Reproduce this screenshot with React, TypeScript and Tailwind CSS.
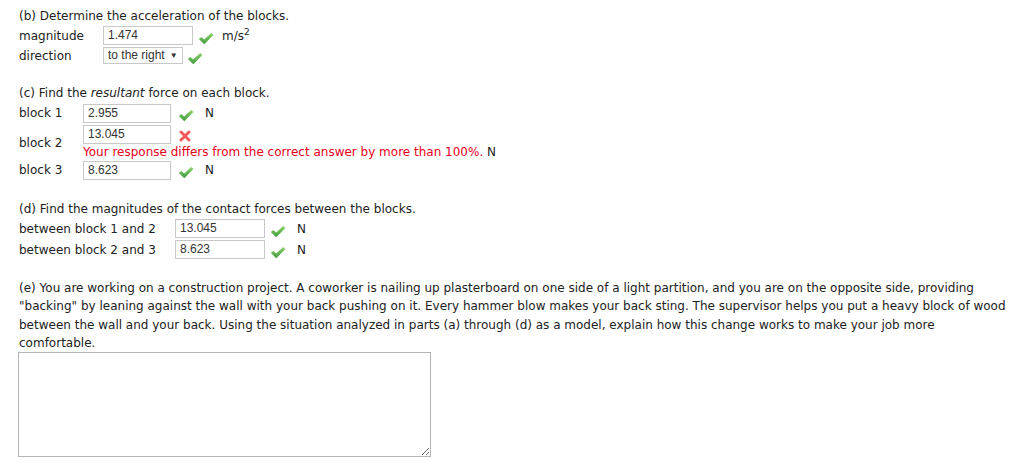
import React from "react";

const Check = () => (
  <svg width="16" height="13" viewBox="0 0 16 13" className="inline-block">
    <defs>
      <linearGradient id="ckg" x1="0" y1="0" x2="0" y2="1">
        <stop offset="0" stopColor="#8fd36f" />
        <stop offset="1" stopColor="#3f9a3a" />
      </linearGradient>
    </defs>
    <path d="M0.8 7 L3.4 5 L6.2 7.6 L13.2 1 L15.4 3 L6.3 12.2 Z" fill="url(#ckg)" />
  </svg>
);

const Cross = () => (
  <svg width="12" height="12" viewBox="0 0 12 12" className="inline-block">
    <path d="M2 2 L10 10 M10 2 L2 10" stroke="#f05a5a" strokeWidth="3" strokeLinecap="round" />
  </svg>
);

const Input = ({ value, w }: { value: string; w: string }) => (
  <div className={`${w} h-[19px] border border-[#c8c8c8] bg-white pl-[4px] text-[12px] leading-[17px] text-[#333] font-['Liberation_Sans',Arial,sans-serif]`}>
    {value}
  </div>
);

export default function App() {
  return (
    <div className="w-[1024px] h-[462px] bg-white overflow-hidden font-['DejaVu_Sans',Verdana,sans-serif] text-[12px] text-[#222]">
      <div className="pl-[19px] pr-[18px] pt-[8px]">
        <div className="leading-[16px]">(b) Determine the acceleration of the blocks.</div>
        <div className="flex items-center h-[21px] mt-[1px]">
          <div className="w-[84px]">magnitude</div>
          <Input value="1.474" w="w-[90px]" />
          <div className="ml-[5px] mt-[4px]"><Check /></div>
          <div className="ml-[8px]">m/s<sup className="text-[9px]">2</sup></div>
        </div>
        <div className="flex items-center h-[19px]">
          <div className="w-[84px]">direction</div>
          <div className="w-[80px] h-[17px] border border-[#c8c8c8] bg-white pl-[4px] text-[12px] leading-[15px] text-[#333] font-['Liberation_Sans',Arial,sans-serif] flex items-center">
            to the right <span className="ml-[5px] text-[8px]">▼</span>
          </div>
          <div className="ml-[4px] mt-[4px]"><Check /></div>
        </div>

        <div className="mt-[20px] leading-[16px]">(c) Find the <i>resultant</i> force on each block.</div>
        <div className="flex items-center h-[20px] mt-[2px]">
          <div className="w-[64px]">block 1</div>
          <Input value="2.955" w="w-[88px]" />
          <div className="ml-[7px] mt-[4px]"><Check /></div>
          <div className="ml-[11px]">N</div>
        </div>
        <div className="flex items-center mt-[1px]">
          <div className="w-[64px]">block 2</div>
          <div>
            <div className="flex items-center">
              <Input value="13.045" w="w-[88px]" />
              <div className="ml-[8px] mt-[2px]"><Cross /></div>
            </div>
            <div className="leading-[17px]"><span className="text-[#e8001c]">Your response differs from the correct answer by more than 100%.</span> N</div>
          </div>
        </div>
        <div className="flex items-center h-[20px] -mt-[1px]">
          <div className="w-[64px]">block 3</div>
          <Input value="8.623" w="w-[88px]" />
          <div className="ml-[7px] mt-[4px]"><Check /></div>
          <div className="ml-[11px]">N</div>
        </div>

        <div className="mt-[21px] leading-[16px]">(d) Find the magnitudes of the contact forces between the blocks.</div>
        <div className="flex items-center h-[21px] mt-[1px]">
          <div className="w-[156px]">between block 1 and 2</div>
          <Input value="13.045" w="w-[90px]" />
          <div className="ml-[5px] mt-[4px]"><Check /></div>
          <div className="ml-[11px]">N</div>
        </div>
        <div className="flex items-center h-[21px]">
          <div className="w-[156px]">between block 2 and 3</div>
          <Input value="8.623" w="w-[90px]" />
          <div className="ml-[5px] mt-[4px]"><Check /></div>
          <div className="ml-[11px]">N</div>
        </div>

        <p className="mt-[19px] leading-[18.3px]">
          (e) You are working on a construction project. A coworker is nailing up plasterboard on one side of a light partition, and you are on the opposite side, providing "backing" by leaning against the wall with your back pushing on it. Every hammer blow makes your back sting. The supervisor helps you put a heavy block of wood between the wall and your back. Using the situation analyzed in parts (a) through (d) as a model, explain how this change works to make your job more comfortable.
        </p>
        <textarea className="block -ml-[1px] mt-0 w-[413px] h-[105px] border border-[#b4b4b4] bg-white resize" />
      </div>
    </div>
  );
}
